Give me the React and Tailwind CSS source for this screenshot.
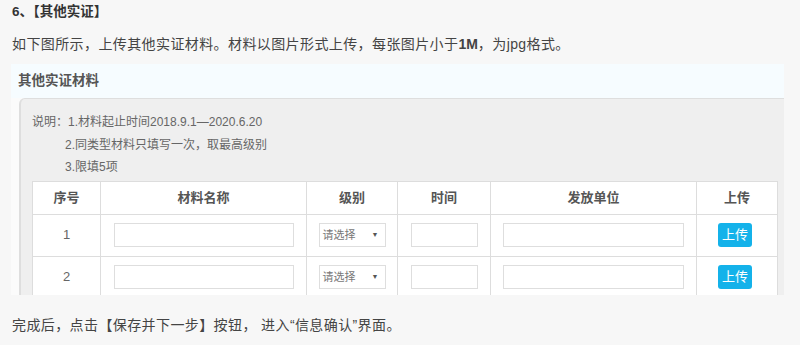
import React from "react";

const rows = [1, 2];

function Field({ w }) {
  return <div className={`${w} h-[24px] mx-auto bg-white border border-[#dedede]`} />;
}

export default function App() {
  return (
    <div
      className="w-[800px] h-[345px] overflow-hidden bg-[#f7f7f7] flex flex-col pt-[2px] text-[#444]"
      style={{ fontFamily: '"Liberation Sans", "Noto Sans CJK SC", sans-serif' }}
    >
      <h3 className="pl-[12px] h-[20px] leading-[20px] text-[13.5px] font-bold text-[#333]">
        6、【其他实证】
      </h3>
      <p className="mt-[12px] pl-[12px] leading-[20px] text-[14px] tracking-[0.4px]">
        如下图所示，上传其他实证材料。材料以图片形式上传，每张图片小于<span className="font-bold tracking-normal">1M</span>，为jpg格式。
      </p>

      {/* screenshot block */}
      <div className="mt-[10px] ml-[11px] w-[773px] h-[231px] shrink-0 bg-[#fbfbfb] flex flex-col overflow-hidden">
        <div className="h-[34px] shrink-0 bg-[#f6fcff] flex items-center pl-[7px]">
          <span className="text-[13.5px] font-bold text-[#555]">其他实证材料</span>
        </div>
        <div className="ml-[8px] flex-1 bg-[#efefef] border-l-2 border-t border-[#dedede] rounded-tl-[6px] pl-[11px] pr-[7px] pt-[12px]">
          <div className="text-[12px] leading-[22.5px] text-[#666]">
            <div>说明：1.材料起止时间2018.9.1—2020.6.20</div>
            <div className="pl-[33px]">2.同类型材料只填写一次，取最高级别</div>
            <div className="pl-[33px]">3.限填5项</div>
          </div>
          <table className="mt-[2px] w-[745px] table-fixed border-collapse bg-white">
            <colgroup>
              <col className="w-[68px]" />
              <col className="w-[206px]" />
              <col className="w-[91px]" />
              <col className="w-[93px]" />
              <col className="w-[206px]" />
              <col className="w-[81px]" />
            </colgroup>
            <thead>
              <tr className="h-[33px] text-[13px] font-bold text-[#555]">
                {["序号", "材料名称", "级别", "时间", "发放单位", "上传"].map((h) => (
                  <th key={h} className="border border-[#dddddd] font-bold">
                    {h}
                  </th>
                ))}
              </tr>
            </thead>
            <tbody>
              {rows.map((n) => (
                <tr key={n} className="h-[42px]">
                  <td className="border border-[#dddddd] text-center text-[13px] text-[#666]">{n}</td>
                  <td className="border border-[#dddddd]">
                    <Field w="w-[180px]" />
                  </td>
                  <td className="border border-[#dddddd]">
                    <div className="w-[67px] h-[24px] mx-auto bg-white border border-[#dedede] flex items-center justify-between pl-[3px] pr-[6px]">
                      <span className="text-[11px] text-[#777]">请选择</span>
                      <span className="text-[7px] text-[#555]">▼</span>
                    </div>
                  </td>
                  <td className="border border-[#dddddd]">
                    <Field w="w-[67px]" />
                  </td>
                  <td className="border border-[#dddddd]">
                    <Field w="w-[181px]" />
                  </td>
                  <td className="border border-[#dddddd]">
                    <div className="ml-[21px] w-[34px] h-[24px] rounded-[3px] bg-[#14b2ea] text-white text-[13px] flex items-center justify-center">
                      上传
                    </div>
                  </td>
                </tr>
              ))}
            </tbody>
          </table>
        </div>
      </div>

      <p className="mt-[20px] pl-[12px] leading-[20px] text-[14px] tracking-[0.4px]">
        完成后，点击【保存并下一步】按钮， 进入“信息确认”界面。
      </p>
    </div>
  );
}
